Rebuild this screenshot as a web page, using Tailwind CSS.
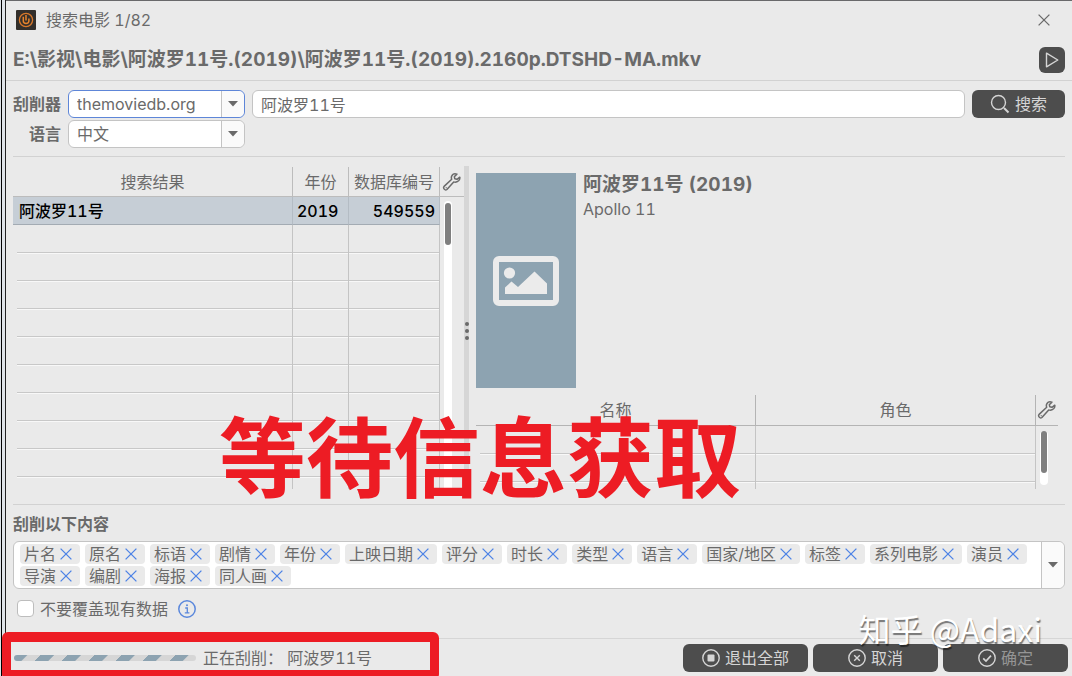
<!DOCTYPE html>
<html lang="zh-CN">

<head>
    <meta charset="UTF-8">
    <meta name="viewport" content="width=device-width, initial-scale=1.0">
    <title>搜索电影</title>
    <script src="https://cdn.jsdelivr.net/npm/@tailwindcss/browser@4"></script>
</head>

<body class="h-screen overflow-hidden bg-[#dfe3e8] font-['Inter','Noto_Sans_CJK_SC',sans-serif] text-base leading-5 text-[#6a6a6a] tabular-nums">

    <!-- shared icons -->
    <svg class="hidden">
        <symbol id="wrench" viewBox="0 0 20 20">
            <path d="M17.800 5.200 15 7.300 12.800 6.800 12.300 4.700 14.900 2.100C13 1.400 11 1.900 10 3.500 9.200 4.700 9.200 6 9.700 7.200L2.100 14.400C.7 16 2.900 19 4.900 17.500L11.700 9.900C13.300 10.400 15.200 10 16.600 8.800 17.600 7.900 18 6.500 17.800 5.200Z"
                fill="none" stroke="currentColor" stroke-width="1.500" stroke-linejoin="round" />
            <circle cx="4.200" cy="15.700" r="0.600" fill="currentColor" />
        </symbol>
        <symbol id="caret" viewBox="0 0 10 6">
            <path d="M0 0h10L5 5.5z" fill="currentColor" />
        </symbol>
        <symbol id="cross" viewBox="0 0 12 12">
            <path d="M.6.6l10.8 10.8M11.4.6.6 11.4" fill="none" stroke="currentColor" stroke-width="1.3" />
        </symbol>
    </svg>

    <div class="flex h-full">
        <!-- edge of the window behind -->
        <div class="w-[6px] shrink-0 border-r border-[#222] bg-[#dfe3e8] pl-px">
            <div class="h-full w-px bg-black"></div>
        </div>

        <main class="relative flex min-w-0 grow flex-col border-t border-[#69696b] bg-[#eaeaea]">
            <header class="flex h-[38px] shrink-0 items-center pl-[10px] pr-[22px]">
                <svg class="size-5" viewBox="0 0 20 20">
                    <rect width="20" height="20" rx="1" fill="#332f2b" />
                    <circle cx="10" cy="10" r="6.6" fill="none" stroke="#d9792b" stroke-width="1.3" />
                    <path d="M10 5v5.500M7.300 6.800v4.300c0 3.200 5.600 3.200 5.600 0V8.500" fill="none" stroke="#e8842c" stroke-width="1.500" />
                </svg>
                <h1 class="ml-[10px] grow">搜索电影 1/82</h1>
                <button aria-label="关闭"><svg class="size-3"><use href="#cross" /></svg></button>
            </header>

            <div class="flex h-[42px] shrink-0 items-center justify-between border-b border-[#d2d2d2] pl-[7px] pr-[7px]">
                <h2 class="text-[19px] font-bold">E:\影视\电影\阿波罗11号.(2019)\阿波罗11号.(2019).2160p.DTSHD-MA.mkv</h2>
                <button aria-label="播放" class="flex size-[26px] items-center justify-center rounded-md bg-[#4d4d4d] text-[#d5d5d5]">
                    <svg class="h-4 w-[14px]" viewBox="0 0 14 16"><path d="M1.500 1.200v13.600L12.800 8z" fill="none" stroke="currentColor" stroke-width="1.400" stroke-linejoin="round" /></svg>
                </button>
            </div>

            <div class="mx-[7px] shrink-0 border-b border-[#d2d2d2] pt-[9px] pb-2">
                <div class="flex items-center">
                    <label for="scraper" class="w-12 text-right font-bold">刮削器</label>
                    <div class="relative ml-[7px] w-[177px]">
                        <select id="scraper" class="h-7 w-full appearance-none rounded-md border border-[#5e86d8] bg-white pl-2">
                            <option>themoviedb.org</option>
                        </select>
                        <div class="pointer-events-none absolute inset-y-px right-px flex w-[23px] items-center justify-center rounded-r-md border-l border-[#c4c4c4] bg-[#fafafa]">
                            <svg class="h-[6px] w-[10px]"><use href="#caret" /></svg>
                        </div>
                    </div>
                    <input type="text" aria-label="搜索" value="阿波罗11号" class="ml-[7px] h-7 min-w-0 grow rounded-md border border-[#c4c4c4] bg-white px-2">
                    <button class="ml-[7px] flex h-7 w-[93px] items-center justify-center gap-[5px] rounded-md bg-[#4d4d4d] text-[#d5d5d5]">
                        <svg class="size-5" viewBox="0 0 20 20"><path d="M14 14l4.500 4.500" stroke="currentColor" stroke-width="2" /><circle cx="8.500" cy="8.500" r="7" fill="none" stroke="currentColor" stroke-width="1.400" /></svg>
                        搜索
                    </button>
                </div>
                <div class="mt-[2px] flex items-center">
                    <label for="language" class="w-12 text-right font-bold">语言</label>
                    <div class="relative ml-[7px] w-[177px]">
                        <select id="language" class="h-7 w-full appearance-none rounded-md border border-[#c4c4c4] bg-white pl-2">
                            <option>中文</option>
                        </select>
                        <div class="pointer-events-none absolute inset-y-px right-px flex w-[23px] items-center justify-center rounded-r-md border-l border-[#c4c4c4] bg-[#fafafa]">
                            <svg class="h-[6px] w-[10px]"><use href="#caret" /></svg>
                        </div>
                    </div>
                </div>
            </div>

            <div class="mx-[7px] flex min-h-0 grow basis-0 border-b border-[#d2d2d2] pt-[10px] pb-[15px]">
                <!-- results -->
                <section class="flex w-[451px] shrink-0 overflow-hidden">
                    <div class="grow overflow-hidden">
                        <table class="w-full table-fixed border-separate border-spacing-0">
                            <thead>
                                <tr class="h-[30px] *:border-r *:border-b *:border-[#bcbcbc] *:p-0 *:font-normal">
                                    <th>搜索结果</th>
                                    <th class="w-14">年份</th>
                                    <th class="w-[91px]">数据库编号</th>
                                </tr>
                            </thead>
                            <tbody id="results">
                                <tr class="h-7 bg-[#c6ced6] font-medium text-black *:border-r *:border-b *:border-r-[#b4bcc4] *:border-b-[#a3abb3] *:py-0">
                                    <td class="pl-[6px]">阿波罗11号</td>
                                    <td class="pl-1">2019</td>
                                    <td class="pr-1 text-right">549559</td>
                                </tr>
                            </tbody>
                        </table>
                    </div>
                    <div class="flex w-6 shrink-0 flex-col">
                        <button aria-label="设置列" class="h-[30px] border-b border-[#bcbcbc] pl-[2px]"><svg class="size-5"><use href="#wrench" /></svg></button>
                        <div class="mt-1 ml-1 w-2 grow rounded-t-full bg-white"><div class="mx-px mt-[2px] h-[42px] rounded-full bg-[#7f7f7f]"></div></div>
                    </div>
                </section>

                <div class="-mt-px -mb-[7px] flex w-[5px] shrink-0 flex-col items-center justify-center gap-[3px] bg-[#d6d6d6]">
                    <span class="size-1 rounded-full bg-[#6a6a6a]"></span>
                    <span class="size-1 rounded-full bg-[#6a6a6a]"></span>
                    <span class="size-1 rounded-full bg-[#6a6a6a]"></span>
                </div>

                <!-- details -->
                <section class="mr-[7px] ml-[7px] flex min-w-0 grow flex-col overflow-hidden">
                    <div class="mt-[6px] flex gap-[7px]">
                        <div class="flex h-[215px] w-[100px] items-center justify-center bg-[#8da3b1]">
                            <svg class="h-[50px] w-[66px]" viewBox="0 0 66 50">
                                <rect x="3" y="3" width="60" height="44" rx="3" fill="none" stroke="#ebebeb" stroke-width="6" />
                                <circle cx="16.500" cy="17" r="5.600" fill="#ebebeb" />
                                <path d="M12 38v-6.500l6.500-6 6.500 5.500L41.500 15.500 54 27.500V38z" fill="#ebebeb" />
                            </svg>
                        </div>
                        <div>
                            <h3 class="mt-[2px] text-[19px] leading-5 font-bold">阿波罗11号 (2019)</h3>
                            <p class="mt-1">Apollo 11</p>
                        </div>
                    </div>
                    <div class="mt-[7px] flex min-h-0 grow">
                        <div class="grow overflow-hidden">
                            <table class="w-full table-fixed border-separate border-spacing-0">
                                <thead>
                                    <tr class="h-[31px] *:border-r *:border-b *:border-[#b4b4b4] *:p-0 *:font-normal">
                                        <th>名称</th>
                                        <th>角色</th>
                                    </tr>
                                </thead>
                                <tbody id="cast"></tbody>
                            </table>
                        </div>
                        <div class="flex w-[22px] shrink-0 flex-col">
                            <button aria-label="设置列" class="h-[31px] border-b border-[#b4b4b4] pl-px"><svg class="size-5"><use href="#wrench" /></svg></button>
                            <div class="mt-[5px] mb-1 ml-1 w-2 grow rounded-full bg-white"><div class="mx-px h-[42px] rounded-full bg-[#7f7f7f]"></div></div>
                        </div>
                    </div>
                </section>
            </div>

            <section class="mx-[7px] shrink-0">
                <h3 class="mt-[9px] font-bold">刮削以下内容</h3>
                <div class="mt-[7px] flex rounded-md border border-[#c4c4c4] bg-white">
                    <div id="tags" class="flex grow flex-wrap gap-x-[5px] gap-y-[2px] py-[2px] pl-[6px]"></div>
                    <button aria-label="展开" class="flex w-[23px] shrink-0 items-center justify-center rounded-r-md border-l border-[#c4c4c4] bg-[#fafafa]">
                        <svg class="h-[6px] w-[10px]"><use href="#caret" /></svg>
                    </button>
                </div>
                <div class="flex h-[49px] items-center pb-[10px] pl-1">
                    <input type="checkbox" id="keep" class="size-[17px] appearance-none rounded-sm border border-[#bdbdbd] bg-white">
                    <label for="keep" class="ml-[6px]">不要覆盖现有数据</label>
                    <svg class="ml-[10px] size-[18px]" viewBox="0 0 18 18" fill="none" stroke="#5b88dc">
                        <circle cx="9" cy="9" r="8.200" stroke-width="1.500" />
                        <path d="M7.200 8H9.300v4.800M6.800 12.800h4.600" stroke-width="1.300" />
                        <circle cx="9" cy="5.200" r="1" fill="#5b88dc" stroke="none" />
                    </svg>
                </div>
            </section>

            <footer class="flex h-[38px] shrink-0 items-center border-t border-[#d6d6d6] pr-1 pl-2">
                <div class="h-[6px] w-[182px] rounded-full bg-[repeating-linear-gradient(135deg,#8da3b1_0,#8da3b1_9px,#d6d6d6_10px,#d6d6d6_19px)]"></div>
                <p class="ml-[7px] grow">正在刮削： 阿波罗11号</p>
                <div class="flex gap-[5px] text-[#d5d5d5] *:flex *:h-7 *:w-[125px] *:items-center *:justify-center *:gap-[5px] *:rounded-md *:bg-[#4d4d4d]">
                    <button>
                        <svg class="size-[18px]" viewBox="0 0 18 18"><circle cx="9" cy="9" r="8.200" fill="none" stroke="currentColor" stroke-width="1.400" /><rect x="5.500" y="5.500" width="7" height="7" rx="1" fill="currentColor" /></svg>
                        退出全部
                    </button>
                    <button>
                        <svg class="size-[18px]" viewBox="0 0 18 18" fill="none" stroke="currentColor" stroke-width="1.400"><circle cx="9" cy="9" r="8.200" /><path d="M6.200 6.200l5.600 5.600M11.800 6.200l-5.600 5.600" /></svg>
                        取消
                    </button>
                    <button disabled>
                        <svg class="size-[18px]" viewBox="0 0 18 18" fill="none" stroke="currentColor" stroke-width="1.400"><circle cx="9" cy="9" r="8.200" /><path d="M5.200 9.300l2.800 2.700 5-5.300" stroke-width="1.700" /></svg>
                        <span class="text-[#959595]">确定</span>
                    </button>
                </div>
            </footer>

            <!-- annotations -->
            <p class="absolute bottom-[173px] left-[213px] text-[87px] leading-[87px] font-bold whitespace-nowrap text-[#ed1c24]">等待信息获取</p>
            <p class="absolute right-[30px] bottom-[28px] font-['Noto_Sans_CJK_SC',sans-serif] text-[32px] leading-10 whitespace-nowrap text-white text-shadow-[1px_2px_1px_#00000080]">知乎 @Adaxi</p>
            <div class="absolute -bottom-1 -left-[4px] h-12 w-[437px] rounded-md border-x-[9px] border-y-[10px] border-[#ed1c24]"></div>
        </main>
    </div>

    <script>
        const tags = ["片名", "原名", "标语", "剧情", "年份", "上映日期", "评分", "时长", "类型", "语言", "国家/地区", "标签", "系列电影", "演员", "导演", "编剧", "海报", "同人画"];

        document.getElementById("tags").innerHTML = tags.map(tag => `
            <span class="flex h-5 items-center gap-1 rounded-sm bg-[#eaeaea] pr-2 pl-1">${tag}
                <button aria-label="移除${tag}" class="text-[#4d83e6]"><svg class="size-3"><use href="#cross" /></svg></button>
            </span>`).join("");

        function addEmptyRows(id, rows, cols) {
            const cell = `<td class="border-r border-[#c4c4c4] p-0"><div class="h-7 border-b border-[#c8c8c8] shadow-[0_1px_0_#f8f8f8]"></div></td>`;
            const first = `<td class="border-r border-[#c4c4c4] p-0"><div class="ml-1 h-7 border-b border-[#c8c8c8] shadow-[0_1px_0_#f8f8f8]"></div></td>`;
            const row = `<tr>${first}${cell.repeat(cols - 1)}</tr>`;
            document.getElementById(id).insertAdjacentHTML("beforeend", row.repeat(rows));
        }

        addEmptyRows("results", 10, 3);
        addEmptyRows("cast", 3, 2);
    </script>
</body>

</html>
